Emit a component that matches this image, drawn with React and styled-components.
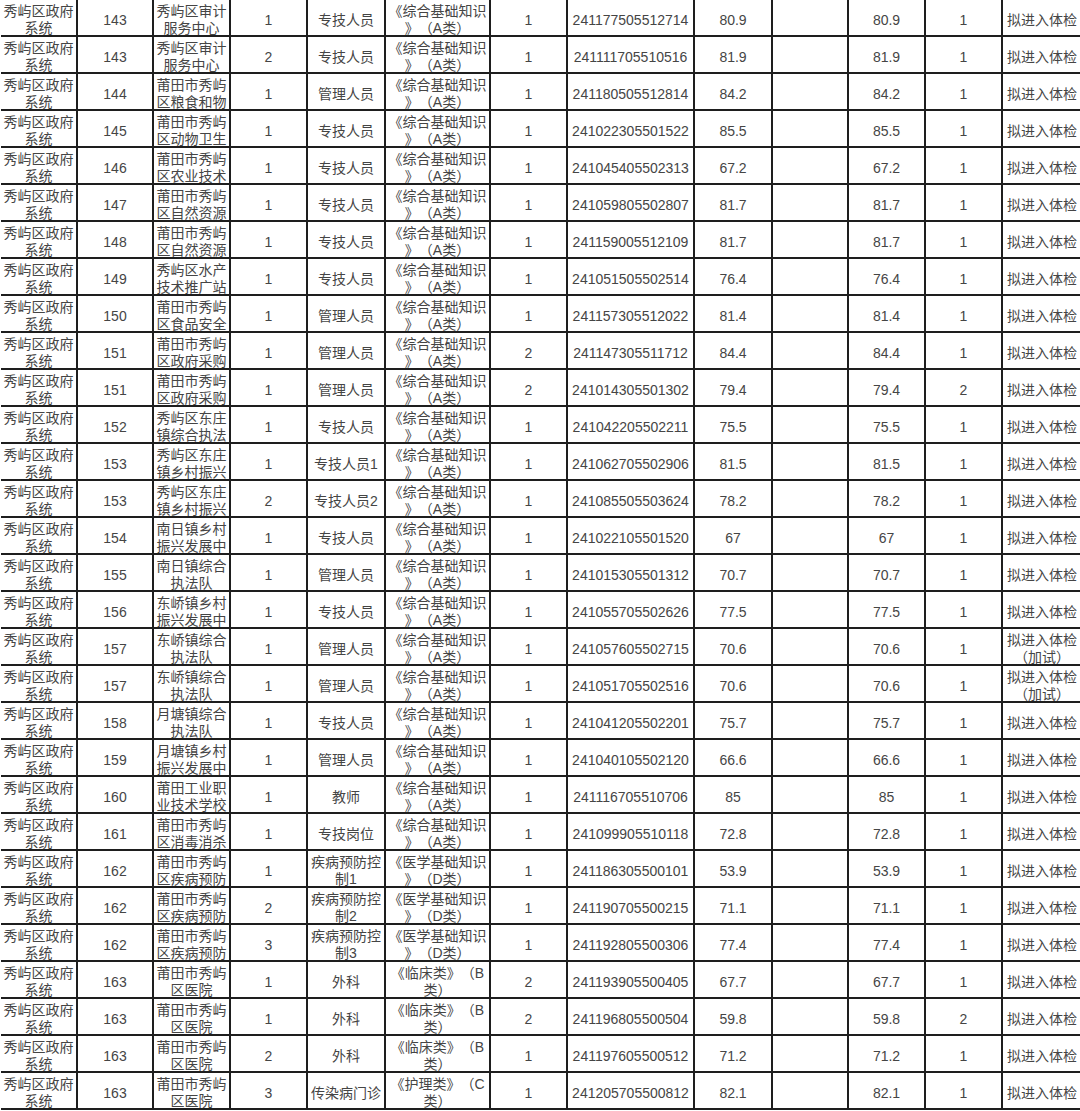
import React from "react";
import styled, { createGlobalStyle } from "styled-components";

const GlobalStyle = createGlobalStyle`
  html, body {
    margin: 0;
    padding: 0;
    background: #ffffff;
    overflow: hidden;
  }
  body {
    font-family: "Liberation Sans", "Noto Sans CJK SC", sans-serif;
  }
`;

const Sheet = styled.div`
  display: flex;
  flex-direction: column;
  margin-left: 1px;
  width: 1082px;
  background: #ffffff;
`;

const Row = styled.div`
  display: grid;
  grid-template-columns: 77px 76px 77px 77px 78px 105px 77px 127px 78px 76px 77px 77px 80px;
`;

const Cell = styled.div`
  box-sizing: border-box;
  height: 37px;
  border-right: 2px solid #1e1e1e;
  border-bottom: 2px solid #1e1e1e;
  padding: 5px 1px 0;
  display: flex;
  align-items: center;
  justify-content: center;
  overflow: hidden;
`;

const Text = styled.span`
  display: block;
  width: 100%;
  text-align: center;
  font-size: 14px;
  line-height: 16.8px;
  color: #454545;
  line-break: anywhere;
  word-break: break-all;
  text-spacing-trim: space-all;
`;

const A = "《综合基础知识》（A类）";
const D = "《医学基础知识》（D类）";
const B = "《临床类》（B类）";
const C = "《护理类》（C类）";
const OK = "拟进入体检";
const OKX = "拟进入体检（加试）";

const rows = [
  ["143", "秀屿区审计服务中心", "1", "专技人员", A, "1", "241177505512714", "80.9", "1", OK],
  ["143", "秀屿区审计服务中心", "2", "专技人员", A, "1", "241111705510516", "81.9", "1", OK],
  ["144", "莆田市秀屿区粮食和物", "1", "管理人员", A, "1", "241180505512814", "84.2", "1", OK],
  ["145", "莆田市秀屿区动物卫生", "1", "专技人员", A, "1", "241022305501522", "85.5", "1", OK],
  ["146", "莆田市秀屿区农业技术", "1", "专技人员", A, "1", "241045405502313", "67.2", "1", OK],
  ["147", "莆田市秀屿区自然资源", "1", "专技人员", A, "1", "241059805502807", "81.7", "1", OK],
  ["148", "莆田市秀屿区自然资源", "1", "专技人员", A, "1", "241159005512109", "81.7", "1", OK],
  ["149", "秀屿区水产技术推广站", "1", "专技人员", A, "1", "241051505502514", "76.4", "1", OK],
  ["150", "莆田市秀屿区食品安全", "1", "管理人员", A, "1", "241157305512022", "81.4", "1", OK],
  ["151", "莆田市秀屿区政府采购", "1", "管理人员", A, "2", "241147305511712", "84.4", "1", OK],
  ["151", "莆田市秀屿区政府采购", "1", "管理人员", A, "2", "241014305501302", "79.4", "2", OK],
  ["152", "秀屿区东庄镇综合执法", "1", "专技人员", A, "1", "241042205502211", "75.5", "1", OK],
  ["153", "秀屿区东庄镇乡村振兴", "1", "专技人员1", A, "1", "241062705502906", "81.5", "1", OK],
  ["153", "秀屿区东庄镇乡村振兴", "2", "专技人员2", A, "1", "241085505503624", "78.2", "1", OK],
  ["154", "南日镇乡村振兴发展中", "1", "专技人员", A, "1", "241022105501520", "67", "1", OK],
  ["155", "南日镇综合执法队", "1", "管理人员", A, "1", "241015305501312", "70.7", "1", OK],
  ["156", "东峤镇乡村振兴发展中", "1", "专技人员", A, "1", "241055705502626", "77.5", "1", OK],
  ["157", "东峤镇综合执法队", "1", "管理人员", A, "1", "241057605502715", "70.6", "1", OKX],
  ["157", "东峤镇综合执法队", "1", "管理人员", A, "1", "241051705502516", "70.6", "1", OKX],
  ["158", "月塘镇综合执法队", "1", "专技人员", A, "1", "241041205502201", "75.7", "1", OK],
  ["159", "月塘镇乡村振兴发展中", "1", "管理人员", A, "1", "241040105502120", "66.6", "1", OK],
  ["160", "莆田工业职业技术学校", "1", "教师", A, "1", "241116705510706", "85", "1", OK],
  ["161", "莆田市秀屿区消毒消杀", "1", "专技岗位", A, "1", "241099905510118", "72.8", "1", OK],
  ["162", "莆田市秀屿区疾病预防", "1", "疾病预防控制1", D, "1", "241186305500101", "53.9", "1", OK],
  ["162", "莆田市秀屿区疾病预防", "2", "疾病预防控制2", D, "1", "241190705500215", "71.1", "1", OK],
  ["162", "莆田市秀屿区疾病预防", "3", "疾病预防控制3", D, "1", "241192805500306", "77.4", "1", OK],
  ["163", "莆田市秀屿区医院", "1", "外科", B, "2", "241193905500405", "67.7", "1", OK],
  ["163", "莆田市秀屿区医院", "1", "外科", B, "2", "241196805500504", "59.8", "2", OK],
  ["163", "莆田市秀屿区医院", "2", "外科", B, "1", "241197605500512", "71.2", "1", OK],
  ["163", "莆田市秀屿区医院", "3", "传染病门诊", C, "1", "241205705500812", "82.1", "1", OK],
];

export default function App() {
  return (
    <>
      <GlobalStyle />
      <Sheet>
        {rows.map((r, i) => {
          const [code, unit, post, title, subject, ratio, ticket, score, rank, result] = r;
          const cells = [
            "秀屿区政府系统",
            code,
            unit,
            post,
            title,
            subject,
            ratio,
            ticket,
            score,
            "",
            score,
            rank,
            result,
          ];
          return (
            <Row key={i}>
              {cells.map((c, j) => (
                <Cell key={j}>
                  <Text>{c}</Text>
                </Cell>
              ))}
            </Row>
          );
        })}
      </Sheet>
    </>
  );
}
